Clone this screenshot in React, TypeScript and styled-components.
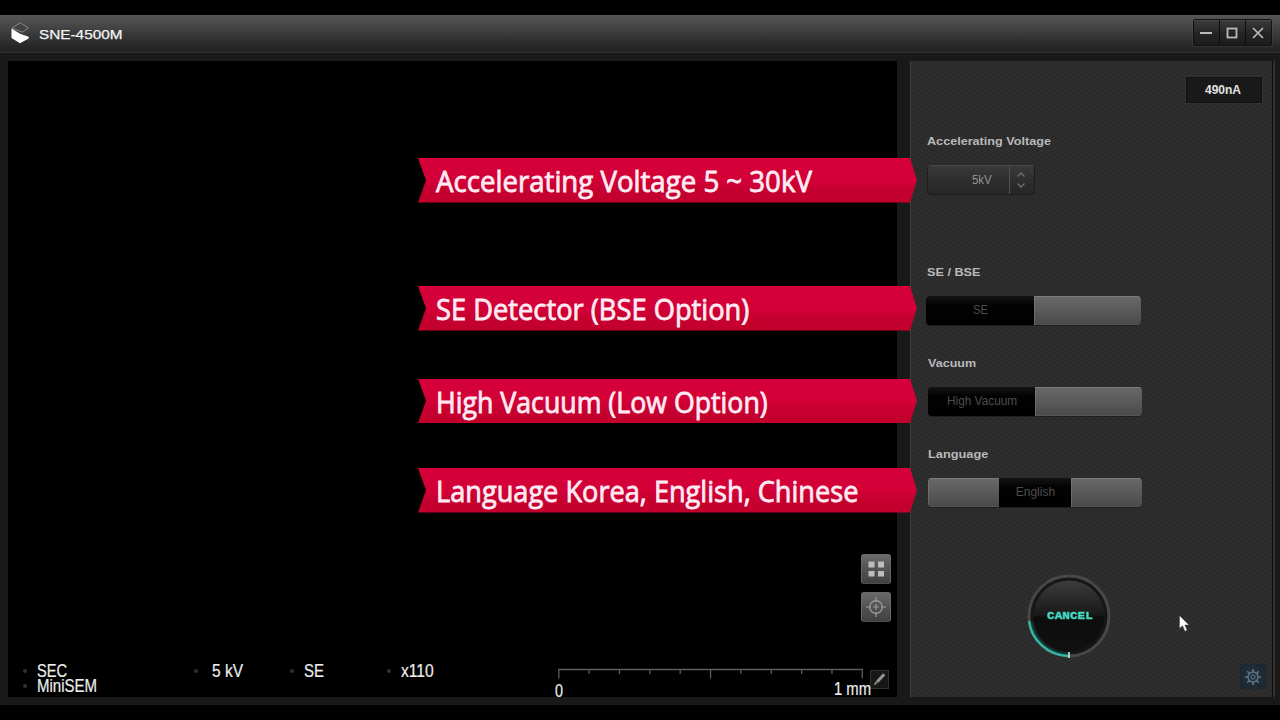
import React, { useLayoutEffect, useRef, useState } from "react";
import styled, { createGlobalStyle, css } from "styled-components";

const GlobalStyle = createGlobalStyle`
  * { box-sizing: border-box; }
  html, body { margin: 0; padding: 0; background: #000; }
  body { width: 1280px; height: 720px; overflow: hidden; font-family: "Liberation Sans", Arial, sans-serif; }
  button { font: inherit; padding: 0; margin: 0; border: 0; background: none; color: inherit; }
`;

/* Text stretched or condensed horizontally to a fixed width. */
const FitBox = styled.span<{ $w: number }>`
  display: block;
  flex: none;
  width: ${(p) => p.$w}px;
  text-align: left;
  white-space: nowrap;
`;
const FitInner = styled.span`
  display: inline-block;
  vertical-align: top;
  transform-origin: 0 50%;
`;
function Fit({ w, children }: { w: number; children: React.ReactNode }) {
  const ref = useRef<HTMLSpanElement>(null);
  const [k, setK] = useState(1);
  useLayoutEffect(() => {
    if (ref.current) setK(w / ref.current.offsetWidth);
  }, [w]);
  return (
    <FitBox $w={w}>
      <FitInner ref={ref} style={{ transform: `scaleX(${k})` }}>{children}</FitInner>
    </FitBox>
  );
}

const Screen = styled.div`
  position: relative;
  width: 1280px;
  height: 720px;
  padding: 15px 0;
  background: #000;
  overflow: hidden;
`;
const Window = styled.div`
  display: flex;
  flex-direction: column;
  height: 690px;
  background: #191919;
`;
const TitleBar = styled.header`
  display: flex;
  align-items: flex-start;
  height: 38px;
  padding: 4px 8.5px 0 10px;
  background: linear-gradient(#565656 0, #484848 25%, #343434 60%, #212121 94%, #1f1f1f 95%, #303030 98%, #282828 100%);
`;
const Brand = styled.div`
  display: flex;
  gap: 8.5px;
  flex: 1;
  color: #f4f4f4;
  font-size: 13.5px;
  line-height: 31px;
  -webkit-text-stroke: 0.25px #f4f4f4;
  svg { margin-top: 3px; }
`;
const WindowButtons = styled.div`
  display: flex;
  width: 79px;
  height: 27px;
  border: 1px solid #111;
  border-radius: 2px;
  background: #0e0e0e;
  gap: 1px;
  box-shadow: 0 0 0 1px rgba(90, 90, 90, 0.25);
`;
const WindowButton = styled.button`
  flex: 1;
  display: flex;
  align-items: center;
  justify-content: center;
  background: linear-gradient(#3b3b3b, #242424 55%, #1c1c1c);
  box-shadow: inset 0 1px #464646;
`;
const Body = styled.main`
  display: flex;
  flex: 1;
  padding: 8px 4px 8px 8px;
  gap: 13px;
`;
const Viewport = styled.section`
  display: flex;
  flex-direction: column;
  justify-content: flex-end;
  width: 889px;
  background: #000;
`;
const Tools = styled.div`
  display: flex;
  flex-direction: column;
  align-items: flex-end;
  gap: 7.5px;
  padding-right: 6px;
  margin-bottom: 40.5px;
`;
const ToolButton = styled.button`
  display: flex;
  align-items: center;
  justify-content: center;
  width: 30px;
  height: 30px;
  border: 1px solid #686868;
  border-bottom-color: #4d4d4d;
  border-radius: 3px;
  background: linear-gradient(#6a6a6a, #525252 50%, #414141);
`;
const StatusBar = styled.footer`
  display: flex;
  height: 35px;
  color: #ededed;
  font-size: 18px;
  line-height: 16px;
  -webkit-text-stroke: 0.2px #ededed;
`;
const Status = styled.div<{ $w: number }>`
  display: flex;
  flex-direction: column;
  flex: none;
  width: ${(p) => p.$w}px;
  padding: 1px 0 0 15px;
`;
const StatusLine = styled.div<{ $gap: number }>`
  display: flex;
  align-items: center;
  gap: ${(p) => p.$gap}px;
  height: 15.5px;
`;
const Dot = styled.i`
  width: 4px;
  height: 4px;
  border-radius: 2px;
  background: #303030;
`;
const Scale = styled.div`
  display: flex;
  flex-direction: column;
  flex: none;
  width: 316px;
  padding-top: 6px;
  svg { display: block; flex: none; margin-left: 3px; }
`;
const ScaleLabels = styled.div`
  display: flex;
  flex: none;
  justify-content: space-between;
  align-items: flex-start;
  margin-top: 4px;
`;
const ScaleEnd = styled.div`
  margin-top: -2px;
`;
const EditButton = styled.button`
  display: flex;
  align-items: center;
  justify-content: center;
  width: 19px;
  height: 19px;
  margin: 8px 0 0 -1px;
  border: 1px solid #30302c;
  background: #171715;
`;
const Panel = styled.aside`
  display: flex;
  flex-direction: column;
  width: 362px;
  padding: 16px 10px 0 16px;
  border-left: 1px solid #3c3c3c;
  background-color: #2c2c2c;
  background-image:
    repeating-linear-gradient(30deg, rgba(0, 0, 0, 0.07) 0 1px, transparent 1px 4px),
    repeating-linear-gradient(-30deg, rgba(255, 255, 255, 0.018) 0 1px, transparent 1px 4px);
  box-shadow: 1px 0 #0b0b0b, 2px 0 #333, 3px 0 #333;
`;
const Current = styled.div`
  align-self: flex-end;
  display: flex;
  justify-content: center;
  width: 76px;
  height: 26px;
  padding-right: 3px;
  border: 1px solid #111;
  outline: 1px solid rgba(60, 60, 60, 0.35);
  background: #191919;
  color: #e4e4e4;
  font-size: 13px;
  font-weight: bold;
  line-height: 23px;
`;
const Field = styled.div<{ $gap: number; $shift?: number }>`
  display: flex;
  flex-direction: column;
  margin: ${(p) => p.$gap}px 0 0 ${(p) => p.$shift || 0}px;
`;
const Label = styled.div<{ $indent?: number }>`
  height: 16px;
  margin-bottom: 16px;
  padding-left: ${(p) => p.$indent || 0}px;
  color: #b9b9b9;
  font-size: 11.5px;
  font-weight: bold;
  line-height: 16px;
`;
const Spinner = styled.div`
  display: flex;
  width: 108px;
  height: 30px;
  border: 1px solid #1e1e1e;
  border-top-color: #474747;
  border-radius: 4px;
  background: linear-gradient(#393939, #2e2e2e 50%, #262626);
  color: #949494;
  font-size: 12px;
  line-height: 28px;
`;
const SpinnerValue = styled.div`
  display: flex;
  justify-content: flex-end;
  width: 82px;
  padding-right: 17.5px;
  border-right: 1px solid #505050;
`;
const Arrows = styled.div`
  display: flex;
  flex: 1;
  align-items: center;
  justify-content: center;
  padding-right: 1.5px;
`;
const Segments = styled.div`
  display: flex;
  width: 214.5px;
  height: 29px;
  border-radius: 4px;
  overflow: hidden;
  box-shadow: 0 1px rgba(0, 0, 0, 0.3);
`;
const Segment = styled.button<{ $on?: boolean }>`
  display: flex;
  flex: 1;
  align-items: center;
  justify-content: center;
  padding: 0 0 1px 1px;
  font-size: 12px;
  color: #4c4e4e;
  ${(p) =>
    p.$on
      ? css`background: linear-gradient(#141414, #030303 30%, #000);`
      : css`
          background: linear-gradient(#686868, #5a5a5a 50%, #494949);
          box-shadow: inset 0 1px #7c7c7c, inset 1px 0 rgba(140, 140, 140, 0.4), inset 0 -1px #555;
        `}
`;
const CancelButton = styled.button`
  position: relative;
  display: flex;
  align-items: center;
  justify-content: center;
  align-self: flex-start;
  width: 84px;
  height: 84px;
  margin: 67px 0 0 100px;
  padding-left: 1px;
  color: #45dcc6;
  font: bold 10.5px/14px "Liberation Mono", monospace;
  -webkit-text-stroke: 0.3px #45dcc6;
  > svg { position: absolute; inset: 0; }
  > span { position: relative; }
`;
const SettingsButton = styled.button`
  display: flex;
  align-items: center;
  justify-content: center;
  align-self: flex-end;
  width: 26px;
  height: 25px;
  margin: 6px -4px 0 0;
  background: radial-gradient(circle, #24333e, #1b252d);
`;
const Ribbon = styled.div<{ $top: number }>`
  position: absolute;
  left: 418px;
  top: ${(p) => p.$top}px;
  width: 499px;
  height: 44.5px;
  padding-left: 17.5px;
  clip-path: polygon(0 0, 492px 0, 499px 50%, 492px 100%, 0 100%, 8px 50%);
  background: linear-gradient(#d6003a, #d30037 50%, #c6002f 70%, #c2002c);
  color: #fdeaf2;
  font: 400 28.5px/47px "Open Sans", sans-serif;
  -webkit-text-stroke: 0.8px #fdeaf2;
`;
const Pointer = styled.svg`
  position: absolute;
  left: 1179px;
  top: 615px;
`;

const ribbons = [
  { top: 158, w: 376, text: "Accelerating Voltage 5 ~ 30kV" },
  { top: 286, w: 313, text: "SE Detector (BSE Option)" },
  { top: 378.5, w: 332, text: "High Vacuum (Low Option)" },
  { top: 468, w: 422, text: "Language Korea, English, Chinese" },
];

const statuses = [
  { w: 171, gap: 10, lines: [{ w: 30, text: "SEC" }, { w: 60, text: "MiniSEM" }] },
  { w: 96, gap: 14, lines: [{ w: 31, text: "5 kV" }] },
  { w: 97, gap: 10, lines: [{ w: 20, text: "SE" }] },
  { w: 183, gap: 10, lines: [{ w: 33, text: "x110" }] },
];

const ticks = Array.from({ length: 11 }, (_, i) => i);

export default function App() {
  return (
    <Screen>
      <GlobalStyle />
      <Window>
        <TitleBar>
          <Brand>
            <svg width="20" height="22" viewBox="0 0 20 22">
              <path d="M2 6.2 10 .8l8.5 5-6 4.4z" fill="#414141" stroke="#898989" strokeWidth="1" />
              <path d="M1.5 6.5 10 11.8 18.7 14.8v1.7L10 21.2 1.5 16z" fill="#fff" />
            </svg>
            <Fit w={84}>SNE-4500M</Fit>
          </Brand>
          <WindowButtons>
            <WindowButton>
              <svg width="14" height="14"><path d="M1 7h12" stroke="#bbb" strokeWidth="2" /></svg>
            </WindowButton>
            <WindowButton>
              <svg width="14" height="14"><rect x="2.5" y="2.5" width="9" height="9" fill="none" stroke="#bbb" strokeWidth="1.8" /></svg>
            </WindowButton>
            <WindowButton>
              <svg width="14" height="14"><path d="M2 2l10 10M12 2L2 12" stroke="#bbb" strokeWidth="1.7" /></svg>
            </WindowButton>
          </WindowButtons>
        </TitleBar>
        <Body>
          <Viewport>
            <Tools>
              <ToolButton>
                <svg width="18" height="18" fill="#bcbcbc">
                  <path d="M1.5 1.5h6v6h-6zM11 1.5h6v6h-6zM1.5 11h6v5.5h-6zM11 11h6v5.5h-6z" />
                </svg>
              </ToolButton>
              <ToolButton>
                <svg width="20" height="20" fill="none" stroke="#9c9c9c" strokeWidth="1.2">
                  <circle cx="10" cy="10" r="6.3" />
                  <path d="M10 0v5M10 15v5M0 10h5M15 10h5M10 7v6M7 10h6" />
                </svg>
              </ToolButton>
            </Tools>
            <StatusBar>
              {statuses.map((s) => (
                <Status key={s.lines[0].text} $w={s.w}>
                  {s.lines.map((l) => (
                    <StatusLine key={l.text} $gap={s.gap}><Dot /><Fit w={l.w}>{l.text}</Fit></StatusLine>
                  ))}
                </Status>
              ))}
              <Scale>
                <svg width="306" height="11" fill="none" stroke="#5c5c5c" strokeWidth="1.3">
                  <path d="M.2 1.5h304.7" />
                  {ticks.map((i) => (
                    <path key={i} d={`M${0.8 + i * 30.35} 1.5v${i % 5 === 0 ? 9 : 4.5}`} />
                  ))}
                </svg>
                <ScaleLabels>
                  <Fit w={8}>0</Fit>
                  <ScaleEnd><Fit w={37}>1 mm</Fit></ScaleEnd>
                </ScaleLabels>
              </Scale>
              <EditButton>
                <svg width="17" height="17">
                  <path d="M13.2 3.3 6 11" stroke="#969696" strokeWidth="3" />
                  <path d="M4.3 10.2l2.4 2.2-3.9 1.8z" fill="#8a8a8a" />
                </svg>
              </EditButton>
            </StatusBar>
          </Viewport>
          <Panel>
            <Current><Fit w={36}>490nA</Fit></Current>
            <Field $gap={30}>
              <Label><Fit w={124}>Accelerating Voltage</Fit></Label>
              <Spinner>
                <SpinnerValue><Fit w={20}>5kV</Fit></SpinnerValue>
                <Arrows>
                  <svg width="10" height="18" fill="none" stroke="#707070" strokeWidth="1.4">
                    <path d="M1.5 5.5 5 2l3.5 3.5M1.5 12.5 5 16l3.5-3.5" />
                  </svg>
                </Arrows>
              </Spinner>
            </Field>
            <Field $gap={69} $shift={-0.7}>
              <Label $indent={0.7}><Fit w={54}>SE / BSE</Fit></Label>
              <Segments><Segment $on><Fit w={15}>SE</Fit></Segment><Segment /></Segments>
            </Field>
            <Field $gap={30} $shift={0.5}>
              <Label><Fit w={48}>Vacuum</Fit></Label>
              <Segments><Segment $on><Fit w={70}>High Vacuum</Fit></Segment><Segment /></Segments>
            </Field>
            <Field $gap={30} $shift={0.5}>
              <Label><Fit w={60}>Language</Fit></Label>
              <Segments><Segment /><Segment $on><Fit w={39}>English</Fit></Segment><Segment /></Segments>
            </Field>
            <CancelButton>
              <svg width="84" height="84" fill="none">
                <defs>
                  <linearGradient id="face" x1="0" y1="0" x2="0" y2="1">
                    <stop offset="0" stopColor="#3c3c3c" />
                    <stop offset=".48" stopColor="#191919" />
                    <stop offset=".52" stopColor="#0d0d0d" />
                    <stop offset="1" stopColor="#101010" />
                  </linearGradient>
                </defs>
                <circle cx="42" cy="42" r="41" fill="#161616" />
                <circle cx="42" cy="42" r="40" stroke="#484848" strokeWidth="3" />
                <circle cx="42" cy="42" r="35.5" fill="url(#face)" />
                <path d="M4 48A38.5 38.5 0 0 0 41 80.5" stroke="#0e4f49" strokeWidth="4" opacity=".6" />
                <path d="M2 47A40.3 40.3 0 0 0 41 82" stroke="#36b6a2" strokeWidth="2.4" />
                <path d="M42 78v6" stroke="#b9d8cf" strokeWidth="1.8" />
              </svg>
              <Fit w={46}>CANCEL</Fit>
            </CancelButton>
            <SettingsButton>
              <svg width="18" height="18" fill="none" stroke="#5f788b">
                <circle cx="9" cy="9" r="5" strokeWidth="1.3" />
                <circle cx="9" cy="9" r="2.2" />
                <path d="M9 1v3M9 14v3M1 9h3M14 9h3M3.3 3.3l2.2 2.2M12.5 12.5l2.2 2.2M14.7 3.3l-2.2 2.2M5.5 12.5l-2.2 2.2" strokeWidth="1.6" />
              </svg>
            </SettingsButton>
          </Panel>
        </Body>
      </Window>
      {ribbons.map((r) => (
        <Ribbon key={r.top} $top={r.top}><Fit w={r.w}>{r.text}</Fit></Ribbon>
      ))}
      <Pointer width="12" height="18" viewBox="0 0 12 18">
        <path d="M.5 .5v13l3-2.8 2.4 5.6 2.3-1-2.4-5.3h4.2z" fill="#fff" stroke="#444" strokeWidth=".5" />
      </Pointer>
    </Screen>
  );
}
